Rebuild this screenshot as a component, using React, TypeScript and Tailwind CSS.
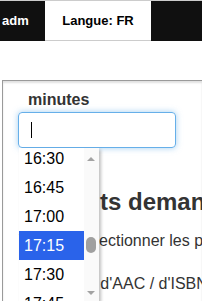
const times = ['16:30', '16:45', '17:00', '17:15', '17:30', '17:45']

function TopBar() {
  return (
    <div className="flex h-[41px] border-t border-[#cccccc] bg-[#101010] text-[13px] font-bold">
      <div className="flex w-[45px] items-center pl-[2px] text-white">adm</div>
      <div className="flex w-[106px] items-center justify-center border-b border-[#cccccc] bg-white text-black">
        Langue: FR
      </div>
      <div className="flex-1" />
    </div>
  )
}

function TimeList() {
  return (
    <div className="absolute left-[19px] top-[148px] flex h-[153px] w-[80px] overflow-hidden bg-white shadow-[2px_2px_3px_rgba(0,0,0,0.25)]">
      <div className="-mt-[4px] flex w-[65px] flex-col">
        {times.map((t) => (
          <div
            key={t}
            className={
              t === '17:15'
                ? 'flex h-[29px] shrink-0 items-center bg-[#2a63ea] pl-[5px] text-white'
                : 'flex h-[29px] shrink-0 items-center pl-[5px] text-black'
            }
          >
            {t}
          </div>
        ))}
      </div>
      <div className="relative w-[15px] bg-[#fafafa]">
        <div className="absolute left-[3px] top-[9px] h-0 w-0 border-x-[4px] border-b-[4px] border-x-transparent border-b-[#a3a3a3]" />
        <div className="absolute left-[2px] top-[89px] h-[16px] w-[10px] rounded-full bg-[#a0a0a0]" />
        <div className="absolute bottom-[6px] left-[3px] h-0 w-0 border-x-[4px] border-t-[4px] border-x-transparent border-t-[#a3a3a3]" />
      </div>
    </div>
  )
}

export default function App() {
  return (
    <div
      className="relative h-[301px] w-[202px] overflow-hidden bg-white"
      style={{ fontFamily: '"Liberation Sans", Arial, sans-serif' }}
    >
      <TopBar />
      <div className="h-[39px]" />
      <div className="ml-[2px] h-[300px] border-l border-t border-[#9a9a9a] pt-[7px] text-[#333333] shadow-[inset_0_2px_2px_rgba(0,0,0,0.12)]">
        <div className="pl-[25px] text-base font-bold leading-6">minutes</div>
        <div className="ml-[15px] flex h-[36px] w-[158px] items-center rounded-[4px] border border-[#66afe9] px-[12px] shadow-[0_0_6px_rgba(102,175,233,0.6)]">
          <div className="h-[16px] w-px bg-black" />
        </div>
        <div className="mt-[38px] whitespace-nowrap pl-[21px] text-2xl font-bold leading-8">
          Produits demandés
        </div>
        <div className="mt-[11px] whitespace-nowrap pl-[16px] text-base leading-6">
          Veuillez sélectionner les produits
        </div>
        <div className="mt-[19px] whitespace-nowrap pl-[28px] text-base leading-6">
          Numéros d'AAC / d'ISBN
        </div>
      </div>
      <TimeList />
    </div>
  )
}
